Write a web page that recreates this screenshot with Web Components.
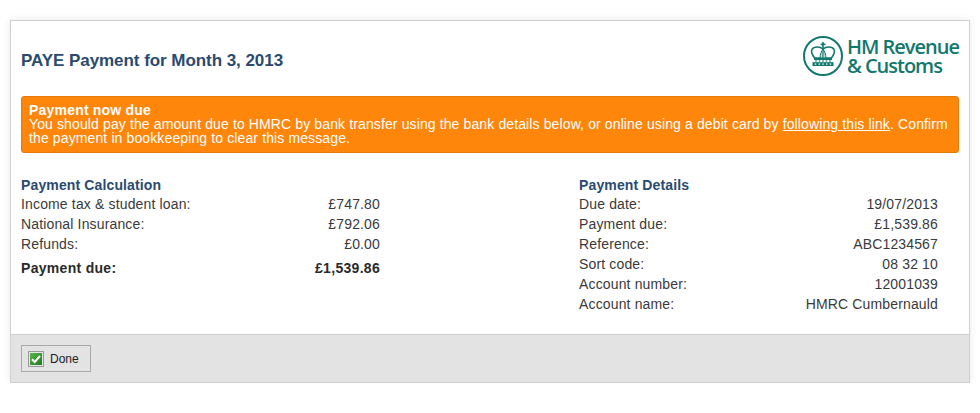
<!DOCTYPE html>
<html>
<head>
<meta charset="utf-8">
<title>PAYE Payment</title>
<style>
  html, body { margin: 0; padding: 0; background: #fff; }
  body { font-family: "Liberation Sans", Arial, sans-serif; }
</style>
</head>
<body>
<payment-page>
  <payment-card>
    <hmrc-header slot="header" heading="PAYE Payment for Month 3, 2013"></hmrc-header>
    <due-notice slot="notice" heading="Payment now due">
      You should pay the amount due to HMRC by bank transfer using the bank details below, or online using a debit card by <a href="#">following this link</a>. Confirm the payment in bookkeeping to clear this message.
    </due-notice>
    <detail-list slot="left" heading="Payment Calculation" class="left">
      <detail-row label="Income tax &amp; student loan:" value="£747.80"></detail-row>
      <detail-row label="National Insurance:" value="£792.06"></detail-row>
      <detail-row label="Refunds:" value="£0.00"></detail-row>
      <detail-row label="Payment due:" value="£1,539.86" total></detail-row>
    </detail-list>
    <detail-list slot="right" heading="Payment Details">
      <detail-row label="Due date:" value="19/07/2013"></detail-row>
      <detail-row label="Payment due:" value="£1,539.86"></detail-row>
      <detail-row label="Reference:" value="ABC1234567"></detail-row>
      <detail-row label="Sort code:" value="08 32 10"></detail-row>
      <detail-row label="Account number:" value="12001039"></detail-row>
      <detail-row label="Account name:" value="HMRC Cumbernauld"></detail-row>
    </detail-list>
    <done-button slot="footer">Done</done-button>
  </payment-card>
</payment-page>

<script>
class PaymentPage extends HTMLElement {
    connectedCallback() {
        this.attachShadow({ mode: 'open' });
        this.shadowRoot.innerHTML = `
            <style>
                :host { display: block; padding: 20px 10px 0; }
            </style>
            <slot></slot>
        `;
    }
}

class PaymentCard extends HTMLElement {
    connectedCallback() {
        this.attachShadow({ mode: 'open' });
        this.shadowRoot.innerHTML = `
            <style>
                :host {
                    display: block;
                    height: 363px;
                    box-sizing: border-box;
                    border: 1px solid #d0d0d0;
                    background: #fff;
                    box-shadow: 0 0 8px rgba(0,0,0,0.09);
                }
                .wrap { display: flex; flex-direction: column; height: 100%; }
                .body { flex: 1; padding: 0 10px; }
                .columns { display: flex; margin-top: 24px; }
                .col-left { width: 359px; margin-right: 199px; }
                .col-right { width: 359px; }
                .footer {
                    height: 48px;
                    box-sizing: border-box;
                    border-top: 1px solid #cfcfcf;
                    background: #e3e3e3;
                    padding: 10px;
                }
            </style>
            <div class="wrap">
                <div class="body">
                    <slot name="header"></slot>
                    <slot name="notice"></slot>
                    <div class="columns">
                        <div class="col-left"><slot name="left"></slot></div>
                        <div class="col-right"><slot name="right"></slot></div>
                    </div>
                </div>
                <div class="footer"><slot name="footer"></slot></div>
            </div>
        `;
    }
}

class HmrcHeader extends HTMLElement {
    connectedCallback() {
        this.attachShadow({ mode: 'open' });
        this.shadowRoot.innerHTML = `
            <style>
                :host {
                    display: flex;
                    justify-content: space-between;
                    align-items: flex-start;
                    height: 75px;
                }
                h1 {
                    margin: 30px 0 0;
                    font-size: 17px;
                    line-height: 20px;
                    font-weight: bold;
                    color: #2a4a70;
                    letter-spacing: -0.05px;
                }
                .logo {
                    display: flex;
                    align-items: center;
                    margin: 15px 0 0 0;
                    color: #11786e;
                }
                svg { width: 40px; height: 40px; display: block; margin-right: 4px; }
                .name {
                    font-family: "Open Sans", sans-serif;
                    font-size: 20px;
                    font-weight: 600;
                    line-height: 19px;
                    letter-spacing: -1px;
                    white-space: nowrap;
                    margin-top: -1px;
                }
            </style>
            <h1>${this.getAttribute('heading')}</h1>
            <div class="logo">
                <svg viewBox="0 0 40 40" fill="#11786e">
                    <circle cx="20" cy="20" r="19" fill="none" stroke="#11786e" stroke-width="2"/>
                    <!-- cross and orb -->
                    <rect x="19.200" y="6" width="1.600" height="7"/>
                    <rect x="17.500" y="7.600" width="5" height="1.600"/>
                    <!-- arches -->
                    <path d="M20 13c-3-2.500-9-3-11 .3-1.400 2.500.4 5.700 2.600 8.700h16.800c2.200-3 4-6.200 2.600-8.700-2-3.300-8-2.800-11-.3z" fill="#fff" stroke="#11786e" stroke-width="1.600"/>
                    <path d="M20 13c-1.800 2.500-2.800 5.500-3 9h6c-.2-3.500-1.200-6.500-3-9z" fill="#bcd9d5" stroke="#11786e" stroke-width="1"/>
                    <path d="M20 13v9" stroke="#11786e" stroke-width="1"/>
                    <!-- band -->
                    <rect x="11" y="22" width="18" height="2"/>
                    <g fill="#5ea59d"><circle cx="13" cy="25" r="1"/><circle cx="16.500" cy="25" r="1"/><circle cx="20" cy="25" r="1"/><circle cx="23.500" cy="25" r="1"/><circle cx="27" cy="25" r="1"/></g>
                    <rect x="9.500" y="26.200" width="21" height="3.800"/>
                    <g fill="#cfe4e1"><circle cx="12.500" cy="28.100" r=".9"/><circle cx="16.300" cy="28.100" r=".9"/><circle cx="20" cy="28.100" r=".9"/><circle cx="23.700" cy="28.100" r=".9"/><circle cx="27.500" cy="28.100" r=".9"/></g>
                </svg>
                <div class="name">HM Revenue<br>&amp; Customs</div>
            </div>
        `;
    }
}

class DueNotice extends HTMLElement {
    connectedCallback() {
        this.attachShadow({ mode: 'open' });
        this.shadowRoot.innerHTML = `
            <style>
                :host {
                    display: block;
                    box-sizing: border-box;
                    height: 57px;
                    padding: 6px 7px 0;
                    background: #fd860b;
                    border: 1px solid #e67a08;
                    border-radius: 3px;
                    color: #fff;
                    font-size: 14px;
                    line-height: 14px;
                    letter-spacing: 0.12px;
                }
                strong { display: block; font-weight: bold; letter-spacing: 0.2px; }
                ::slotted(a) { color: #fff; text-decoration: underline; }
            </style>
            <strong>${this.getAttribute('heading')}</strong>
            <slot></slot>
        `;
    }
}

class DetailList extends HTMLElement {
    connectedCallback() {
        this.attachShadow({ mode: 'open' });
        this.shadowRoot.innerHTML = `
            <style>
                :host { display: block; }
                h2 {
                    margin: 0 0 1px;
                    font-size: 14px;
                    line-height: 16px;
                    font-weight: bold;
                    color: #2a4a70;
                    letter-spacing: 0.13px;
                }
            </style>
            <h2>${this.getAttribute('heading')}</h2>
            <slot></slot>
        `;
    }
}

class DetailRow extends HTMLElement {
    connectedCallback() {
        this.attachShadow({ mode: 'open' });
        this.shadowRoot.innerHTML = `
            <style>
                :host {
                    display: flex;
                    justify-content: space-between;
                    height: 20px;
                    font-size: 14px;
                    line-height: 20px;
                    letter-spacing: 0.15px;
                    color: #3a3a3a;
                }
                :host([total]) {
                    margin-top: 4px;
                    font-weight: bold;
                    color: #2a2a2a;
                    letter-spacing: 0.3px;
                }
            </style>
            <span>${this.getAttribute('label')}</span>
            <span>${this.getAttribute('value')}</span>
        `;
    }
}

class DoneButton extends HTMLElement {
    connectedCallback() {
        this.attachShadow({ mode: 'open' });
        this.shadowRoot.innerHTML = `
            <style>
                :host {
                    display: inline-flex;
                    align-items: center;
                    box-sizing: border-box;
                    width: 70px;
                    height: 27px;
                    padding-left: 6px;
                    border: 1px solid #a9a9a9;
                    font-size: 12px;
                    color: #222;
                }
                svg { display: block; width: 16px; height: 16px; margin-right: 6px; }
            </style>
            <svg viewBox="0 0 16 16">
                <defs>
                    <linearGradient id="g" x1="0" y1="0" x2="1" y2="1">
                        <stop offset="0" stop-color="#5cb54a"/>
                        <stop offset="1" stop-color="#1f7a22"/>
                    </linearGradient>
                </defs>
                <rect x=".5" y=".5" width="15" height="15" fill="#e8e8e8" stroke="#9a9a9a"/>
                <rect x="2" y="2" width="12" height="12" fill="url(#g)"/>
                <path d="M4 8.200l2.700 2.800 5.300-6" fill="none" stroke="#fff" stroke-width="2"/>
            </svg>
            <slot></slot>
        `;
    }
}

customElements.define('payment-page', PaymentPage);
customElements.define('payment-card', PaymentCard);
customElements.define('hmrc-header', HmrcHeader);
customElements.define('due-notice', DueNotice);
customElements.define('detail-list', DetailList);
customElements.define('detail-row', DetailRow);
customElements.define('done-button', DoneButton);
</script>
</body>
</html>
